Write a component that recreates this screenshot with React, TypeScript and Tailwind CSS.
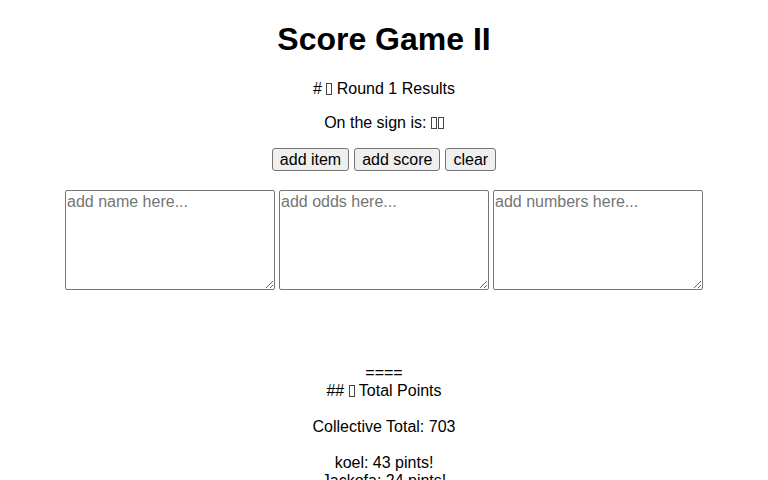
import React from 'react';

// Simple score sheet page, browser-default look.
// The emoji show up as missing-glyph boxes in the reference, so draw those.
const Tofu = ({ label }: { label: string }) => (
  <span
    role="img"
    aria-label={label}
    className="inline-block w-[6px] h-[12px] border border-[#444] align-[-1px]"
  />
);

const fields = ['add name here...', 'add odds here...', 'add numbers here...'];

export default function App() {
  return (
    <div className="min-h-screen bg-white text-black text-center font-['Liberation_Sans',Arial,sans-serif] text-[16px]">
      <h1 className="pt-[21px] text-[32px] font-bold leading-[37px]">Score Game II</h1>

      <p className="mt-[22px] leading-[18px]">
        # <Tofu label="beer" /> Round 1 Results
      </p>
      <p className="mt-[16px] leading-[18px]">
        On the sign is: <Tofu label="flag" />
        <span className="ml-[1px]" />
        <Tofu label="flag" />
      </p>

      {/* controls */}
      <div className="mt-[16px] flex justify-center gap-[5px]">
        <button className="h-[23px] px-[7px] bg-[#efefef] border border-[#767676] rounded-[3px] leading-[19px]">add item</button>
        <button className="h-[23px] px-[7px] bg-[#efefef] border border-[#767676] rounded-[3px] leading-[19px]">add score</button>
        <button className="h-[23px] px-[7px] bg-[#efefef] border border-[#767676] rounded-[3px] leading-[19px]">clear</button>
      </div>

      <div className="mt-[19px] flex justify-center gap-[4px]">
        {fields.map((f) => (
          <textarea
            key={f}
            placeholder={f}
            className="w-[210px] h-[100px] px-[1px] py-[2px] border border-[#767676] rounded-[2px] resize-y leading-[18px] placeholder:text-[#757575]"
          />
        ))}
      </div>

      <div className="mt-[74px] leading-[18px]">
        <div>====</div>
        <div>
          ## <Tofu label="trophy" /> Total Points
        </div>
        <div className="mt-[18px]">Collective Total: 703</div>
        <div className="mt-[18px]">koel: 43 pints!</div>
        <div>Jackofa: 24 pints!</div>
      </div>
    </div>
  );
}
